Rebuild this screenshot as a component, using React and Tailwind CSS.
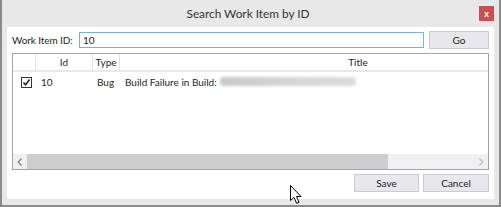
import React from "react";

const font = { fontFamily: 'Lato, "Open Sans", sans-serif' };

function Checkbox() {
  return (
    <div className="w-[11px] h-[11px] border border-[#333333] bg-white flex items-center justify-center">
      <svg width="9" height="9" viewBox="0 0 9 9">
        <path d="M1.5 4.5 L3.6 6.8 L7.6 1.6" fill="none" stroke="#222222" strokeWidth="1.6" />
      </svg>
    </div>
  );
}

export default function App() {
  return (
    <div
      className="relative w-[501px] h-[207px] bg-[#e8e8e8] border-l-2 border-r-2 border-b-2 border-[#8a8a8a] flex flex-col text-[#1e1e1e] overflow-hidden"
      style={font}
    >
      {/* Title bar */}
      <div className="h-[27px] flex items-start shrink-0">
        <div className="flex-1" />
        <div className="text-[11.8px] leading-[16px] mt-[6px] text-[#333333] whitespace-nowrap">Search Work Item by ID</div>
        <div className="flex-1 flex justify-end pr-[5px] pt-[6px]">
          <div className="w-[15px] h-[15px] bg-[#c75050] flex items-center justify-center text-white text-[9px] leading-none font-bold">
            x
          </div>
        </div>
      </div>

      {/* Content panel */}
      <div className="flex-1 bg-white mx-[5px] mb-[6px] flex flex-col pt-[4px] px-[5px] pb-[7px]">
        <div className="flex items-center h-[18px] text-[10px]">
          <span className="w-[67px] shrink-0 whitespace-nowrap leading-[16px] tracking-[-0.1px]">Work Item ID:</span>
          <div className="w-[345px] shrink-0 h-[16px] border border-[#7aaee6] flex items-center px-[3px] leading-[14px]">10</div>
          <button className="ml-[5px] w-[61px] h-[18px] bg-[#e8e8ec] border border-[#c9c9d1] text-[10px] leading-[16px] text-[#222]">
            Go
          </button>
        </div>

        {/* Grid */}
        <div className="mt-[4px] h-[117px] border border-[#a0a4ac] flex flex-col overflow-hidden text-[10px]">
          <div className="flex h-[18px] shrink-0 border-b-2 border-[#e8e8e8]">
            <div className="w-[23px] shrink-0 border-r border-[#e3e3e3]" />
            <div className="w-[57px] shrink-0 border-r border-[#e3e3e3] flex items-center justify-center leading-[16px]">Id</div>
            <div className="w-[27px] shrink-0 border-r border-[#e3e3e3] flex items-center justify-center leading-[16px]">Type</div>
            <div className="w-[476px] shrink-0 flex items-center justify-center leading-[16px]">Title</div>
          </div>
          <div className="flex h-[19px] shrink-0 items-center">
            <div className="w-[23px] shrink-0 flex items-center pl-[8px] pt-[1px]">
              <Checkbox />
            </div>
            <div className="w-[57px] shrink-0 pl-[5px] leading-[16px]">10</div>
            <div className="w-[27px] shrink-0 pl-[4px] leading-[16px]">Bug</div>
            <div className="flex items-center pl-[5px] leading-[16px] whitespace-nowrap">
              <span>Build Failure in Build:</span>
              <div className="ml-[3px] w-[136px] h-[9px] rounded-[3px] blur-[1.5px] bg-gradient-to-r from-[#c8c8c8] via-[#d4d4d4] to-[#dcdcdc]" />
            </div>
          </div>
          <div className="flex-1" />
          {/* Horizontal scrollbar */}
          <div className="h-[15px] shrink-0 flex bg-[#f0f0f0]">
            <div className="w-[14px] flex items-center justify-center">
              <svg width="6" height="8" viewBox="0 0 6 8">
                <path d="M4.5 0.5 L1.2 4 L4.5 7.5" fill="none" stroke="#7a7a7a" strokeWidth="1.2" />
              </svg>
            </div>
            <div className="w-[361px] bg-[#cdcdcd]" />
            <div className="flex-1" />
            <div className="w-[14px] flex items-center justify-center">
              <svg width="6" height="8" viewBox="0 0 6 8">
                <path d="M1.5 0.5 L4.8 4 L1.5 7.5" fill="none" stroke="#bdbdbd" strokeWidth="1.2" />
              </svg>
            </div>
          </div>
        </div>

        <div className="flex-1" />
        <div className="flex justify-end gap-[4px] text-[10px]">
          <button className="w-[65px] h-[18px] bg-[#e8e8ec] border border-[#c9c9d1] leading-[16px] text-[#222]">Save</button>
          <button className="w-[66px] h-[18px] bg-[#e8e8ec] border border-[#c9c9d1] leading-[16px] text-[#222]">Cancel</button>
        </div>
      </div>

      {/* Mouse cursor overlay */}
      <svg className="absolute left-[288px] top-[185px]" width="13" height="20" viewBox="0 0 13 20">
        <path d="M0.5 0.5 L0.5 15.5 L4 12.3 L6.6 18.3 L9 17.3 L6.5 11.5 L11 11.5 Z" fill="#ffffff" stroke="#000000" strokeWidth="1" strokeLinejoin="miter" />
      </svg>
    </div>
  );
}
